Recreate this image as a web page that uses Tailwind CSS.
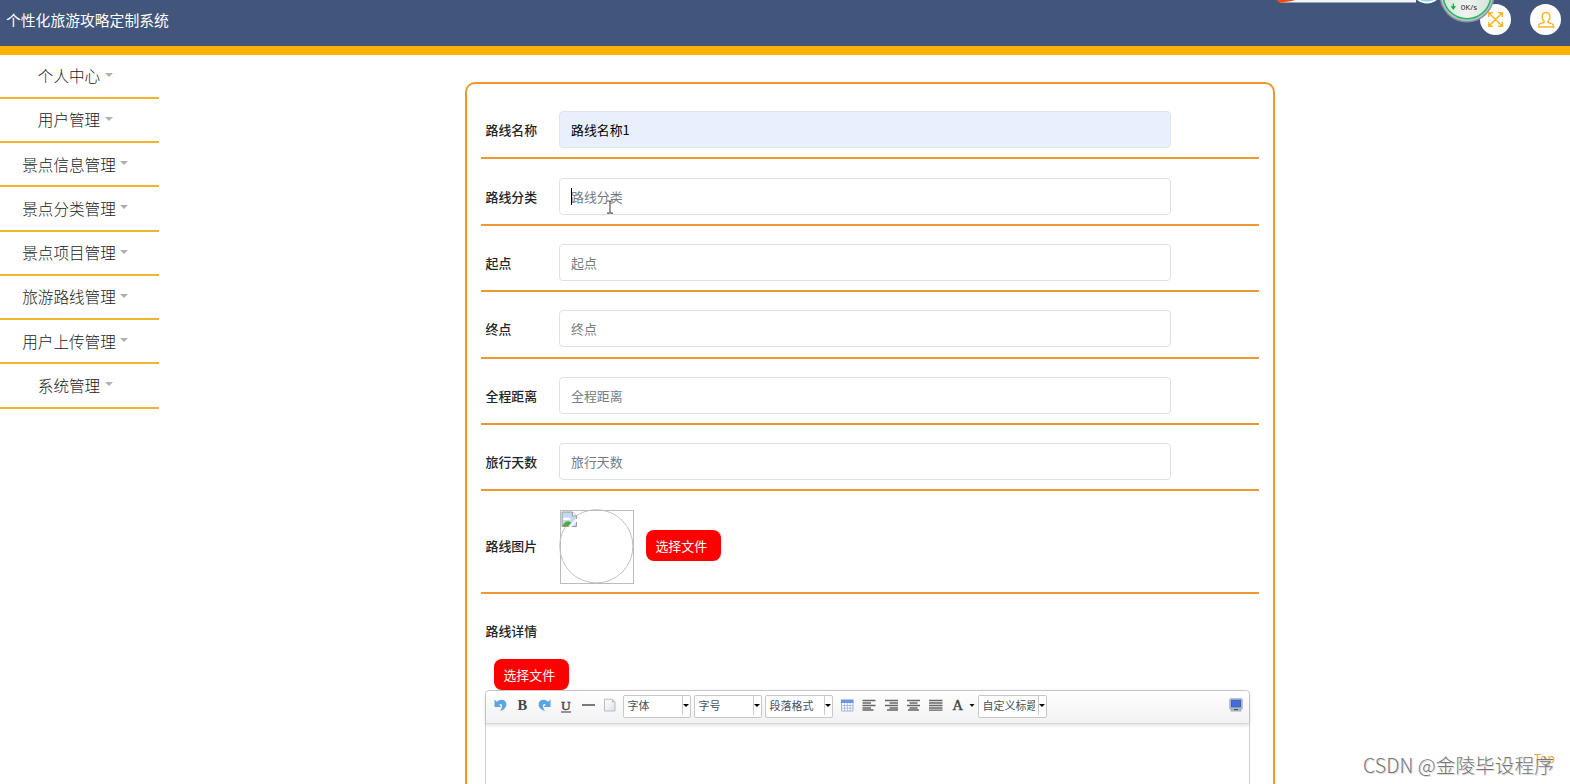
<!DOCTYPE html>
<html lang="zh-CN">
<head>
    <meta charset="UTF-8">
    <meta name="viewport" content="width=device-width, initial-scale=1.0">
    <title>个性化旅游攻略定制系统</title>
    <script src="https://cdn.jsdelivr.net/npm/@tailwindcss/browser@4"></script>
    <style>
        body {
            font-family: 'Noto Sans CJK SC', 'Noto Sans', sans-serif;
        }
    </style>
</head>
<body class="relative h-[784px] overflow-hidden bg-white text-[12.9px] text-[#212529]">
    <!-- header -->
    <header class="flex h-[54.6px] items-start justify-between border-b-[9px] border-[#ffb300] bg-[#42557b] pl-[6px] pr-[9px]">
        <h1 class="pt-[9px] text-[14.8px] leading-[22px] text-white">个性化旅游攻略定制系统</h1>
        <div class="flex gap-[19.5px] pt-[4px]">
            <a class="flex size-[30.5px] items-center justify-center rounded-full bg-white">
                <svg class="size-[17px]" viewBox="0 0 17 17" fill="none" stroke="#fbb62a" stroke-width="1.5">
                    <path d="M2 2l13 13M15 2L2 15M1.700 6V1.700H6M11 1.700h4.300V6M1.700 11v4.300H6M11 15.300h4.300V11"/>
                </svg>
            </a>
            <a class="flex size-[31px] items-center justify-center rounded-full bg-white">
                <svg class="size-[18px]" viewBox="0 0 18 18" fill="none" stroke="#fbb62a" stroke-width="1.5">
                    <path d="M7 10.400C5.500 9.200 5.200 7.500 5.200 5.500 5.200 3 6.700 1.500 9 1.500s3.800 1.500 3.800 4c0 2-.3 3.700-1.800 4.900v1l4.200 1.500c1 .4 1.400 1.200 1.400 3.200H1.400c0-2 .4-2.800 1.400-3.200L7 11.400z"/>
                </svg>
            </a>
        </div>
    </header>

    <!-- desktop network monitor -->
    <svg class="absolute left-[1260px] top-0 h-[30px] w-[245px]" viewBox="0 0 245 30">
        <defs>
            <linearGradient id="ball" x1="0" y1="0" x2="1" y2="0">
                <stop offset="0" stop-color="#d5eadb"/>
                <stop offset=".5" stop-color="#f2f3f2"/>
                <stop offset="1" stop-color="#cfe4d6"/>
            </linearGradient>
        </defs>
        <path d="M18 0h138v2.400H20z" fill="#f4f5f6"/>
        <path d="M17 0h18c-4 1.500-9 1.500-14 2.700-2 .2-3.500-.9-4-2.700z" fill="#ee4a16"/>
        <circle cx="167" cy="-12" r="15.500" fill="#fff"/>
        <circle cx="167" cy="-12" r="13.800" fill="#8fd4f2"/>
        <circle cx="207" cy="-5" r="27.500" fill="#8993a5"/>
        <circle cx="207" cy="-5" r="26" fill="#b9c4cb"/>
        <circle cx="207" cy="-5" r="23.800" fill="url(#ball)" stroke="#22b95a" stroke-width="1.500"/>
        <path d="M193.300 3.500v5M191.300 6.200l2 2.800 2-2.800" fill="none" stroke="#18a846" stroke-width="1.300"/>
        <text x="200.800" y="9.500" font-family="Open Sans, sans-serif" font-size="8" fill="#222">0K/s</text>
    </svg>

    <div class="flex">
        <!-- side menu -->
        <nav class="w-[158.500px] shrink-0 text-[15.6px] font-light text-[#222]">
            <a class="flex h-[44.25px] items-center justify-center gap-[4.5px] border-b-2 border-[#f0b52f] pr-[8px]">个人中心<i class="mb-[2px] border-x-[4.5px] border-t-[4.5px] border-x-transparent border-t-[#b0b0b0]"></i></a>
            <a class="flex h-[44.25px] items-center justify-center gap-[4.5px] border-b-2 border-[#f0b52f] pr-[8px]">用户管理<i class="mb-[2px] border-x-[4.5px] border-t-[4.5px] border-x-transparent border-t-[#b0b0b0]"></i></a>
            <a class="flex h-[44.25px] items-center justify-center gap-[4.5px] border-b-2 border-[#f0b52f] pr-[8px]">景点信息管理<i class="mb-[2px] border-x-[4.5px] border-t-[4.5px] border-x-transparent border-t-[#b0b0b0]"></i></a>
            <a class="flex h-[44.25px] items-center justify-center gap-[4.5px] border-b-2 border-[#f0b52f] pr-[8px]">景点分类管理<i class="mb-[2px] border-x-[4.5px] border-t-[4.5px] border-x-transparent border-t-[#b0b0b0]"></i></a>
            <a class="flex h-[44.25px] items-center justify-center gap-[4.5px] border-b-2 border-[#f0b52f] pr-[8px]">景点项目管理<i class="mb-[2px] border-x-[4.5px] border-t-[4.5px] border-x-transparent border-t-[#b0b0b0]"></i></a>
            <a class="flex h-[44.25px] items-center justify-center gap-[4.5px] border-b-2 border-[#f0b52f] pr-[8px]">旅游路线管理<i class="mb-[2px] border-x-[4.5px] border-t-[4.5px] border-x-transparent border-t-[#b0b0b0]"></i></a>
            <a class="flex h-[44.25px] items-center justify-center gap-[4.5px] border-b-2 border-[#f0b52f] pr-[8px]">用户上传管理<i class="mb-[2px] border-x-[4.5px] border-t-[4.5px] border-x-transparent border-t-[#b0b0b0]"></i></a>
            <a class="flex h-[44.25px] items-center justify-center gap-[4.5px] border-b-2 border-[#f0b52f] pr-[8px]">系统管理<i class="mb-[2px] border-x-[4.5px] border-t-[4.5px] border-x-transparent border-t-[#b0b0b0]"></i></a>
        </nav>

        <!-- route form -->
        <main class="ml-[306.500px] mt-[27.4px] h-[702px] w-[810px] overflow-hidden rounded-t-[10px] border-2 border-b-0 border-[#f0982a] px-[14px] pt-[9px]">
            <div class="flex h-[66.4px] items-start border-b-2 border-[#eb9a33] pl-[4.500px] pt-[18.2px]">
                <label class="w-[73.500px] font-medium leading-[37px]">路线名称</label>
                <div class="h-[37px] w-[612px] rounded border border-[#dfe4ea] bg-[#e8f0fe] px-[11px] leading-[35px] text-black">路线名称1</div>
            </div>
            <div class="flex h-[66.4px] items-start border-b-2 border-[#eb9a33] pl-[4.500px] pt-[18.2px]">
                <label class="w-[73.500px] font-medium leading-[37px]">路线分类</label>
                <div class="relative h-[37px] w-[612px] rounded border border-[#dee2e6] px-[11px] leading-[35px] text-[#757c83]">路线分类
                    <span class="absolute left-[11px] top-[9px] h-[17px] w-px bg-black"></span>
                    <svg class="absolute left-[46px] top-[21px] h-[14px] w-[8px]" viewBox="0 0 8 14" fill="none" stroke="#555" stroke-width="1.200">
                        <path d="M1 1h2l1 .6L5 1h2M4 1.600v11M1 13.200h2l1-.6 1 .6h2"/>
                    </svg>
                </div>
            </div>
            <div class="flex h-[66.4px] items-start border-b-2 border-[#eb9a33] pl-[4.500px] pt-[18.2px]">
                <label class="w-[73.500px] font-medium leading-[37px]">起点</label>
                <div class="h-[37px] w-[612px] rounded border border-[#dee2e6] px-[11px] leading-[35px] text-[#757c83]">起点</div>
            </div>
            <div class="flex h-[66.4px] items-start border-b-2 border-[#eb9a33] pl-[4.500px] pt-[18.2px]">
                <label class="w-[73.500px] font-medium leading-[37px]">终点</label>
                <div class="h-[37px] w-[612px] rounded border border-[#dee2e6] px-[11px] leading-[35px] text-[#757c83]">终点</div>
            </div>
            <div class="flex h-[66.4px] items-start border-b-2 border-[#eb9a33] pl-[4.500px] pt-[18.2px]">
                <label class="w-[73.500px] font-medium leading-[37px]">全程距离</label>
                <div class="h-[37px] w-[612px] rounded border border-[#dee2e6] px-[11px] leading-[35px] text-[#757c83]">全程距离</div>
            </div>
            <div class="flex h-[66.4px] items-start border-b-2 border-[#eb9a33] pl-[4.500px] pt-[18.2px]">
                <label class="w-[73.500px] font-medium leading-[37px]">旅行天数</label>
                <div class="h-[37px] w-[612px] rounded border border-[#dee2e6] px-[11px] leading-[35px] text-[#757c83]">旅行天数</div>
            </div>
            <div class="flex h-[102.5px] items-center border-b-2 border-[#eb9a33] pl-[4.500px] pt-[9px]">
                <label class="w-[73.500px] font-medium">路线图片</label>
                <svg class="size-[75px] shrink-0" viewBox="0 0 75 75" fill="none">
                    <rect x="1.500" y="1.500" width="73" height="73" stroke="#bcbcbc"/>
                    <circle cx="37.300" cy="37.300" r="36.600" stroke="#c0c0c0"/>
                    <!-- missing image mark -->
                    <path d="M3 3h10.500l4 4v10.500H3z" fill="#c5d8f3" stroke="#9b9b9b"/>
                    <path d="M4 11c0-3 3-3.500 4-2 1.500-1.500 4 0 3.500 2z" fill="#fff"/>
                    <path d="M3.500 17c2-5 6-6 9-3l-3 3z" fill="#4fae3b"/>
                    <path d="M13.500 3v4h4" fill="#fff" stroke="#9b9b9b"/>
                    <path d="M18 10.500L10.500 18" stroke="#fff" stroke-width="2.500"/>
                </svg>
                <button class="-mt-px ml-[12px] h-[31px] w-[74.500px] rounded-[8px] bg-[#ff0000] pr-1 text-white">选择文件</button>
            </div>
            <div class="pl-[4px] pt-[27px]">
                <label class="block pl-[.5px] font-medium leading-[20px]">路线详情</label>
                <button class="ml-[9px] mt-[18px] block h-[31px] w-[74.500px] rounded-[8px] bg-[#ff0000] pr-1 text-white">选择文件</button>
                <!-- rich text editor -->
                <div class="h-[120px] w-[765px] rounded border border-[#cfcfcf]">
                    <div class="flex h-[33px] items-start rounded-t border-b border-[#d8d8d8] bg-linear-to-b from-white to-[#f2f1f3] pl-[7.5px] pr-[6px] pt-[4px] text-[11px] text-[#44535f] shadow-[0_1px_4px_rgba(0,0,0,0.16)]">
                        <svg class="mt-[2px] h-[20px] w-[129px] shrink-0" viewBox="0 0 129 20">
                            <defs>
                                <linearGradient id="sheet" x1="0" y1="0" x2="1" y2="1">
                                    <stop offset="0" stop-color="#fff"/>
                                    <stop offset="1" stop-color="#dce2ea"/>
                                </linearGradient>
                            </defs>
                            <path d="M.5 2.500v7.500h6.800L5.200 7.500C7 6.200 8.300 7.400 8 9.500c-.2 1.800-1 3-2.200 4.500 4-1 6.700-3.500 6.600-6.800C12.200 2.200 6.500 1.300 2.800 4.800z" fill="#5aa5e2"/>
                            <text x="23.500" y="13.200" font-family="Liberation Serif, serif" font-weight="700" font-size="14.500" fill="#444">B</text>
                            <path d="M56.500 2.500v7.500h-6.800l2.100-2.500C50 6.200 48.700 7.400 49 9.500c.2 1.800 1 3 2.200 4.500-4-1-6.700-3.500-6.600-6.800C44.800 2.200 50.500 1.300 54.200 4.800z" fill="#5aa5e2"/>
                            <text x="67" y="13" font-family="Liberation Serif, serif" font-size="13.500" fill="#444" stroke="#444" stroke-width=".4">U</text>
                            <path d="M67 15h10" stroke="#555" stroke-width="1.200"/>
                            <path d="M88 8h13" stroke="#333" stroke-width="1.300"/>
                            <path d="M110.500 2.200h7.500l3 3V14h-10.500z" fill="url(#sheet)" stroke="#b9bcc1"/>
                            <path d="M118 2.200v3h3z" fill="#b8bdc5"/>
                        </svg>
                        <div class="flex h-[23px] w-[68px] shrink-0 rounded-[2px] border border-[#c8c8c8] bg-white">
                            <span class="w-[58px] overflow-hidden whitespace-nowrap pl-[4px] leading-[19px]">字体</span>
                            <span class="flex h-[19px] w-[8px] items-center justify-center border-l border-[#ccc]"><i class="border-x-[3px] border-t-[3px] border-x-transparent border-t-black"></i></span>
                        </div>
                        <div class="ml-[3px] flex h-[23px] w-[68px] shrink-0 rounded-[2px] border border-[#c8c8c8] bg-white">
                            <span class="w-[58px] overflow-hidden whitespace-nowrap pl-[4px] leading-[19px]">字号</span>
                            <span class="flex h-[19px] w-[8px] items-center justify-center border-l border-[#ccc]"><i class="border-x-[3px] border-t-[3px] border-x-transparent border-t-black"></i></span>
                        </div>
                        <div class="ml-[3px] flex h-[23px] w-[68px] shrink-0 rounded-[2px] border border-[#c8c8c8] bg-white">
                            <span class="w-[58px] overflow-hidden whitespace-nowrap pl-[4px] leading-[19px]">段落格式</span>
                            <span class="flex h-[19px] w-[8px] items-center justify-center border-l border-[#ccc]"><i class="border-x-[3px] border-t-[3px] border-x-transparent border-t-black"></i></span>
                        </div>
                        <svg class="mt-[2px] h-[20px] w-[145px] shrink-0" viewBox="0 0 145 20">
                            <path d="M8.500 3.500h11.500v10.500H8.500z" fill="#fff" stroke="#9fb4dc"/>
                            <path d="M8 2.500h12.500V6H8z" fill="#6d96e8"/>
                            <path d="M8.500 8.500H20M8.500 11.200H20M11.500 6v8M14.300 6v8M17.200 6v8" stroke="#9fb4dc" stroke-width=".8"/>
                            <path d="M29.500 3.500h13M29.500 6h8.500M29.500 8.500h13M29.500 11h8.500M29.500 13h11" stroke="#666" stroke-width="1.300"/>
                            <path d="M52 3.500h13M56.500 6H65M52 8.500h13M56.500 11H65M54 13h11" stroke="#666" stroke-width="1.300"/>
                            <path d="M74 3.500h13M76.500 6h8M74 8.500h13M76.500 11h8M75 13h11" stroke="#666" stroke-width="1.300"/>
                            <path d="M96 3.500h13.500M96 6h13.500M96 8.500h13.500M96 11h13.500M96 13.200h13.500" stroke="#666" stroke-width="1.300"/>
                            <text x="119.500" y="12.500" font-family="Liberation Serif, serif" font-size="14.500" fill="#444" stroke="#444" stroke-width=".4">A</text>
                            <path d="M136.500 7h5l-2.500 3z" fill="#111"/>
                        </svg>
                        <div class="flex h-[23px] w-[69px] shrink-0 rounded-[2px] border border-[#c8c8c8] bg-white">
                            <span class="w-[56px] shrink-0 overflow-hidden whitespace-nowrap pl-[4px] leading-[19px]">自定义标题</span>
                            <span class="ml-[3px] flex h-[19px] w-[8px] items-center justify-center border-l border-[#ccc]"><i class="border-x-[3px] border-t-[3px] border-x-transparent border-t-black"></i></span>
                        </div>
                        <svg class="ml-auto mt-[3px] h-[14px] w-[14px]" viewBox="0 0 14 14">
                            <rect x=".5" y=".5" width="13" height="11" rx="1.500" fill="#a9b7d0" stroke="#b8c2d2"/>
                            <rect x="2.500" y="2.300" width="9" height="6.500" fill="#3f6fdd" stroke="#4560a8"/>
                            <path d="M2 11.500h10l.5 2h-11z" fill="#a5aebd"/>
                            <path d="M5 11.600h4" stroke="#445"/>
                        </svg>
                    </div>
                </div>
            </div>
        </main>
    </div>

    <span class="absolute left-[1534px] top-[750px] text-[12px] leading-[16px] text-[#f0a437]">Top</span>
    <span class="absolute left-[1363px] top-[751px] whitespace-nowrap text-[19.7px] font-light leading-[28px] text-[#777] [text-shadow:1px_1px_0_#ddd]">CSDN @金陵毕设程序</span>
</body>
</html>
